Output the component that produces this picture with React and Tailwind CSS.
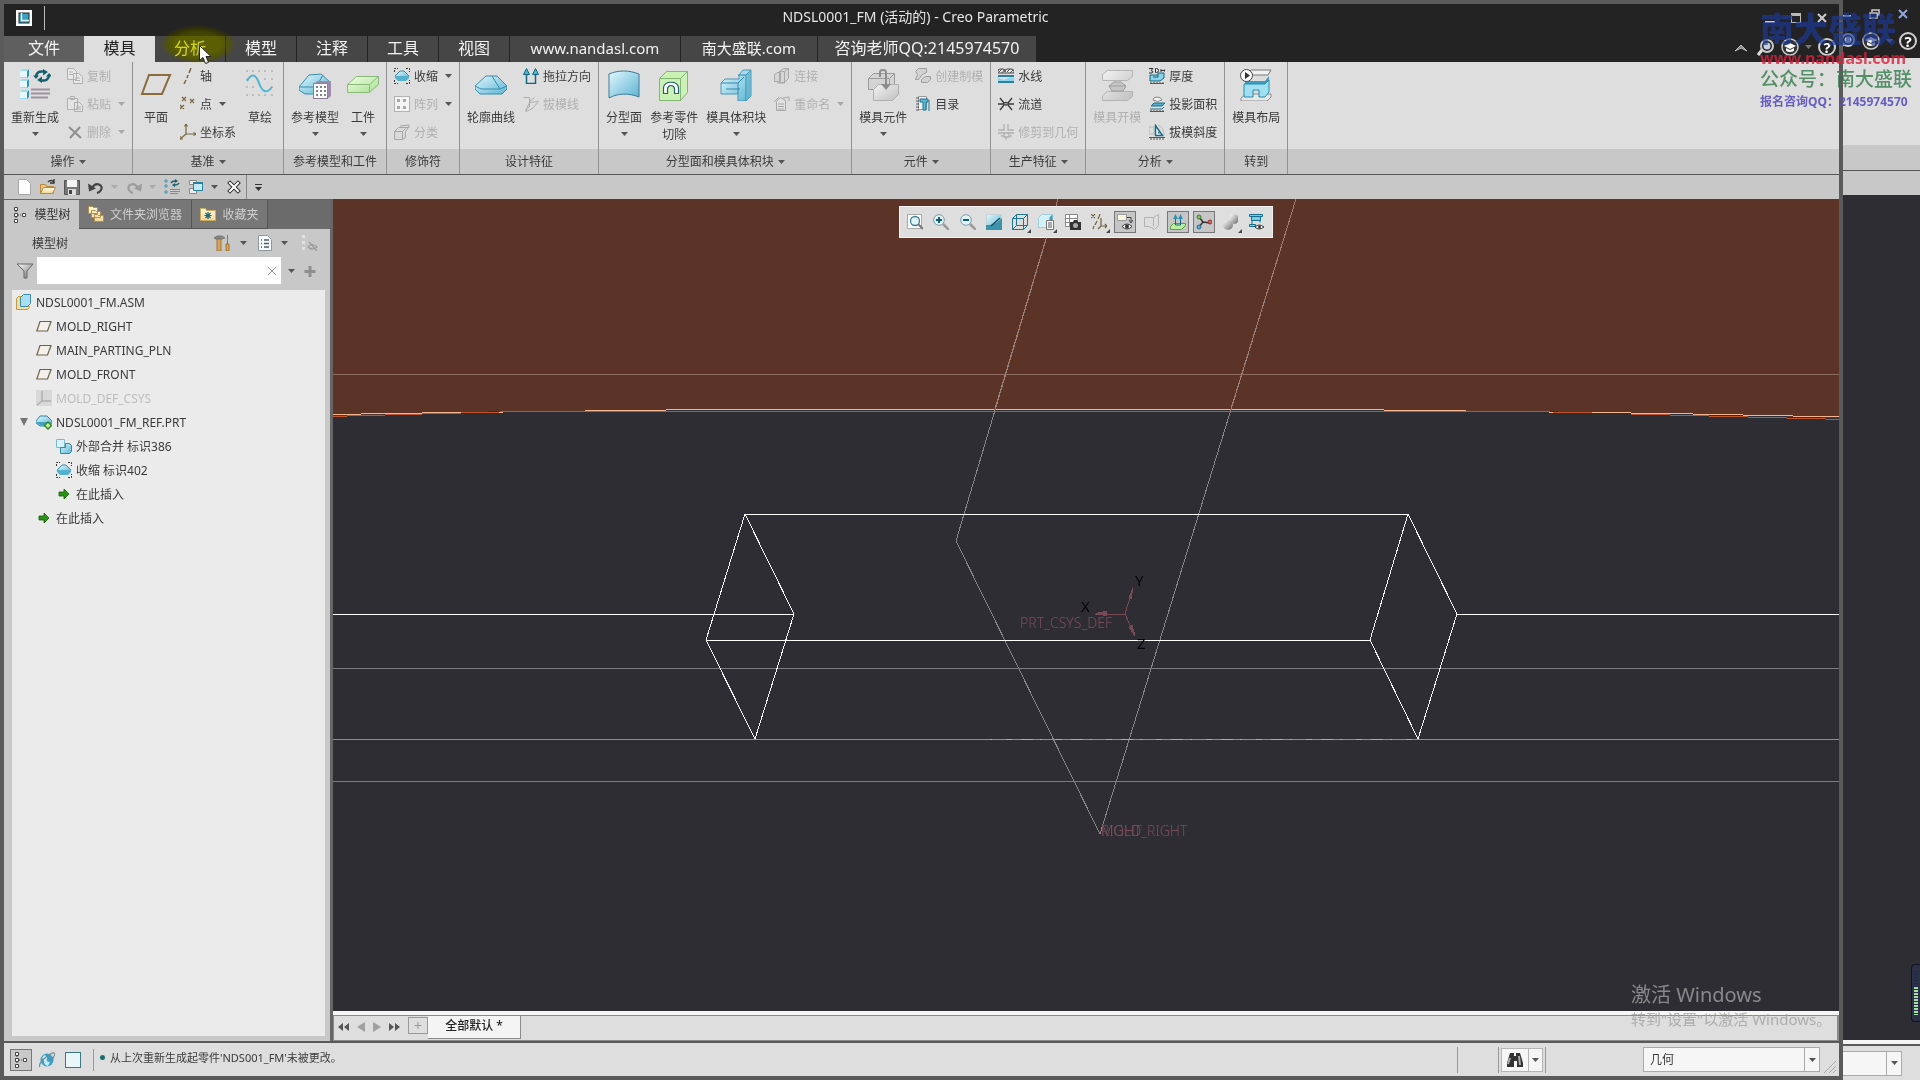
import React from 'react'

const Defs = () => (
  <svg width="0" height="0" className="absolute" aria-hidden="true">
    <defs>
      <linearGradient id="blue" x1="0" y1="0" x2="1" y2="1">
        <stop offset="0" stopColor="#e2f7fd" />
        <stop offset="1" stopColor="#5ab4d4" />
      </linearGradient>
      <linearGradient id="green" x1="0" y1="0" x2="1" y2="1">
        <stop offset="0" stopColor="#effde6" />
        <stop offset="1" stopColor="#a9e08f" />
      </linearGradient>
      <linearGradient id="gray" x1="0" y1="0" x2="1" y2="1">
        <stop offset="0" stopColor="#f2f2f2" />
        <stop offset="1" stopColor="#c0c0c0" />
      </linearGradient>
      <linearGradient id="folder" x1="0" y1="0" x2="0" y2="1">
        <stop offset="0" stopColor="#fffbe8" />
        <stop offset="1" stopColor="#f3d694" />
      </linearGradient>
      <linearGradient id="metal" x1="0" y1="0" x2="1" y2="1">
        <stop offset="0" stopColor="#ffffff" />
        <stop offset="1" stopColor="#6e6e6e" />
      </linearGradient>
    </defs>
  </svg>
)

// 32 x 32 drawings of the big ribbon buttons
const large = {
  regen: (
    <>
      <g fill="#e6f8fc">
        <path d="M1 2h7v7H1zM1 12h7v7H1zM1 23h7v7H1z" />
      </g>
      <g fill="#2d93b3">
        <path d="M8 2l2-2v7L8 9zM8 12l2-2v7l-2 2zM8 23l2-2v7l-2 2z" />
      </g>
      <g fill="#9ddcee">
        <path d="M1 2l2-2h7L8 2zM1 12l2-2h7l-2 2zM1 23l2-2h7l-2 2z" />
        <path d="M1 8h7v1H1zM1 18h7v1H1zM1 29h7v1H1z" />
      </g>
      <path d="M17 8c0-4 3-6 7-5.500M30 6c0 4-3 6-7 5.500" fill="none" stroke="#14606f" strokeWidth="2.500" />
      <path d="M24 0l5 3-5 3.500zM23 14l-5-3 5-3.500zM14 6.500h6L17 10zM27 7.500h6L30 4z" fill="#14606f" />
      <path d="M12 20.500h19M12 24.500h19M12 28.500h17" stroke="#9a949c" strokeWidth="2" />
    </>
  ),
  plane: <path d="M9 6h21L22 25H2z" fill="none" stroke="#8a6c3d" strokeWidth="2" />,
  sketch: (
    <>
      <path d="M3 2v.1M9 2v.1M15 2v.1M21 2v.1M28 2v.1M3 10v.1M28 10v.1M3 18v.1M28 18v.1M3 26v.1M9 26v.1M15 26v.1M21 26v.1M28 26v.1M9 18v.1M21 10v.1" stroke="#666" strokeWidth="1" strokeLinecap="square" />
      <path d="M3 12C8 3 12 6 15 14s7 12 13 4" fill="none" stroke="#4fb4d0" strokeWidth="2" />
    </>
  ),
  refModel: (
    <>
      <path d="M0 18L10 6l12-1 9 8v6l-9 6H6l-6-4z" fill="url(#blue)" stroke="#3a8da8" />
      <path d="M0 18h17l7-12M17 18l-2 7" fill="none" stroke="#3a8da8" />
      <path d="M15 15l3-3h14v15l-4 3z" fill="#9b89ae" />
      <rect x="14.500" y="14.500" width="14" height="15" fill="#fff" stroke="#8d7f9c" />
      <path d="M18 18v.1M22 18v.1M26 18v.1M18 22v.1M22 22v.1M26 22v.1M18 26v.1M22 26v.1M26 26v.1" stroke="#222" strokeWidth="1.500" strokeLinecap="square" />
    </>
  ),
  workpiece: (
    <>
      <path d="M.5 15.500l9-8h22v8l-9 8H.5z" fill="url(#green)" stroke="#8cba7a" />
      <path d="M.5 15.500h22l9-8M22.500 15.500v8" fill="none" stroke="#8cba7a" />
    </>
  ),
  silhouette: (
    <>
      <path d="M0 17L11 7h11l10 10v3l-5 5H5l-5-5z" fill="url(#blue)" stroke="#3a8da8" />
      <path d="M0 17l6 3h19l7-3M25 20l-8-13" fill="none" stroke="#3a8da8" />
    </>
  ),
  parting: <path d="M1 5c9-4 20-4 30 0v23c-10-4-21-4-30 1z" fill="url(#blue)" stroke="#3a7d98" />,
  cutout: (
    <>
      <path d="M1.500 9.500l7-7h21v21l-7 8h-21z" fill="#c9f2b4" stroke="#85b573" />
      <path d="M1.500 9.500h21v22M22.500 9.500l7-7" fill="none" stroke="#85b573" />
      <path d="M5.500 24.500v-6c1-7 14-7 15 0v6h-4v-5c-1-4-6-4-7 0v5z" fill="#fff" stroke="#1f6075" strokeWidth="1.200" />
    </>
  ),
  volume: (
    <>
      <path d="M1 14l4-4h14V6l4-5 8 0v26l-5 5h-8v-7H1z" fill="url(#blue)" stroke="#4b97b1" />
      <path d="M18 6h8v26M26 6l5-5M1 14h17v11M18 14l6-6M6 20h14" fill="none" stroke="#2f8aa8" />
      <path d="M26 6l5-5v26l-5 5z" fill="#5fb3cf" opacity=".7" />
    </>
  ),
  component: (
    <>
      <path d="M1.500 9.500l5-5h21v12l-4 4h-22z" fill="#d4d4d4" stroke="#9c9c9c" />
      <path d="M1.500 9.500h21v9M22.500 9.500l5-5" fill="none" stroke="#9c9c9c" />
      <path d="M6.500 20.500l5-5h20v10l-6 6h-19z" fill="url(#gray)" stroke="#b0b0b0" />
      <path d="M13 8V3q0-2 3-2t3 2v13" fill="none" stroke="#8d8d8d" strokeWidth="2" />
      <path d="M14 15h10l-5 6z" fill="#8d8d8d" />
    </>
  ),
  opening: (
    <>
      <path d="M1.500 5.500l5-4h25v6l-5 4h-25zM1.500 26.500l5-4h25v5l-5 4h-25z" fill="url(#gray)" stroke="#b4b4b4" />
      <path d="M8 17l5-4h7l5 4-3 5H11z" fill="#c6c6c6" stroke="#9b9b9b" />
      <path d="M8 17h17" stroke="#9b9b9b" />
    </>
  ),
  layout: (
    <>
      <path d="M1 29l5-4h25v3l-4 4H1z" fill="#e8e8e8" stroke="#8b8b8b" />
      <path d="M7 4l4-3h20l-3 5H9z" fill="#f2f2f2" stroke="#777" />
      <path d="M5 12h20l4-5v9l-4 4H5z" fill="#3b9dbf" />
      <path d="M4 15h21l4-4v12l-4 5h-6v-7h-6v7H4z" fill="#9fe0f3" stroke="#2c8aab" />
      <circle cx="6.500" cy="6.500" r="6" fill="#fff" stroke="#444" />
      <path d="M5 3l5 3.500L5 10z" fill="#333" />
    </>
  ),
}

// 16 x 16 drawings
const small = {
  copy: (
    <g fill="#e8e8e8" stroke="#b0b0b0">
      <path d="M.5.5h6l3 3v8h-9zM6.500 5.500h5l4 3v7h-9z" />
      <path d="M2 4h4M2 6.500h4M8 10h5M8 12.500h5" />
    </g>
  ),
  paste: (
    <g fill="#e4e4e4" stroke="#b0b0b0">
      <path d="M.5 2.500h10v11H.5zM3.500.5h4v3h-4zM7.500 6.500h5l3 3v6h-8z" />
      <path d="M9 11h5M9 13h5" />
    </g>
  ),
  del: <path d="M2 3l12 11M13 3L3 14" stroke="#8e8e8e" strokeWidth="2" />,
  axis: <path d="M11 0L9 5M8 7l-1 3M6 12l-2 4" stroke="#77683f" strokeWidth="1.500" />,
  point: <path d="M2 1l4 4M6 1L2 5M10 3l4 4M14 3l-4 4M0 9l4 4M4 9l-4 4" stroke="#77683f" strokeWidth="1.300" />,
  csys: (
    <g fill="none" stroke="#77683f" strokeWidth="1.200">
      <path d="M6 0v10h10M6 10L0 15" />
      <path d="M4.500 2.500L6 0l1.500 2.500M13.500 8.500L16 10l-2.500 1.500M0 12v3h3" />
    </g>
  ),
  shrink: (
    <>
      <path d="M1 8l5-5h4l5 5-3 4H4z" fill="url(#blue)" stroke="#3a8da8" />
      <path d="M1 8h14v2l-3 3H4l-3-3z" fill="#54b2cf" />
      <path d="M.5 4V.5H4M12 .5h3.500V4M.5 12v3.500H4M12 15.500h3.500V12" fill="none" stroke="#333" strokeDasharray="2 1" />
    </>
  ),
  pattern: (
    <>
      <rect x=".5" y=".5" width="15" height="15" fill="#f4f4f4" stroke="#b2b2b2" />
      <path d="M3 3h3v3H3zM9 3h3v3H9zM3 10h3v3H3zM9 10h3v3H9z" fill="#a8a8a8" />
    </>
  ),
  classify: (
    <g fill="#dadada" stroke="#a6a6a6">
      <path d="M.5 7.500l4-4h10l-3 4v6l-3 2h-8z" />
      <path d="M.5 7.500h8v8M8.500 7.500l3-3M6 2l9-1v3" fill="none" />
    </g>
  ),
  pull: (
    <g fill="#4fb7d4" stroke="#12697f">
      <path d="M3.500.5L.5 6.500h6zM12.500.5l-3 6h6z" />
      <path d="M3.500 6.500v9h9v-9" fill="none" strokeWidth="1.500" />
    </g>
  ),
  draft: <path d="M.5 1.500h6v9l-4 3M6.500 5.500l5-4M2.500 15.500l4-9 9-1-6 7z" fill="none" stroke="#adadad" />,
  attach: (
    <g fill="#d6d6d6" stroke="#a9a9a9">
      <path d="M.5 6.500l3-2h3v9h-6zM5.500 3.500l4-3h5v10l-4 4h-5z" />
      <path d="M5.500 3.500h5v11M10.500 3.500l4-3M3 15h8" fill="none" />
    </g>
  ),
  rename: (
    <g fill="#e2e2e2" stroke="#a6a6a6">
      <path d="M2.500 5.500l4-4 5 3v10h-9z" />
      <path d="M4 8h6M4 10.500h6M4 13h6M9 2l6-1v4M0 6l5-5" fill="none" />
    </g>
  ),
  mold: (
    <g fill="#d2d2d2" stroke="#9d9d9d">
      <path d="M.5 3.500l3-3h8v4l-4 2-4 5h-3l2-5zM6.500 11.500l4-3h5v3l-3 3h-6z" />
    </g>
  ),
  catalog: (
    <>
      <path d="M3.500.5h8v13h-8z" fill="#eee" stroke="#999" />
      <path d="M1 2h3M1 5h3M1 8h3M1 11h3M1 14h3" stroke="#555" />
      <path d="M5 3h8v3h-2v8H8V6H5z" fill="#59b8d6" stroke="#1c7796" />
      <path d="M14 4v11" stroke="#1c7796" />
    </>
  ),
  waterline: (
    <>
      <path d="M0 5V3q0-2 2-2h3q2 0 2 3 0-3 2-3h4q3 0 3 2v2z" fill="#e9e9e9" stroke="#444" />
      <path d="M1 4l3-3M4 5l3-4M9 4l3-3M12 5l3-3" stroke="#555" />
      <path d="M0 7h16v2H0zM0 13h16v2H0z" fill="#2d7f9c" />
      <path d="M0 9q4 4 8 2t8-2v4H0z" fill="#8bd6ec" />
    </>
  ),
  runner: <path d="M0 8h5M11 8h5M2 2l4 5M14 2l-4 5M2 14l4-5M14 14l-4-5M5 8q3-3 6 0M5 8q3 2 6 0" fill="none" stroke="#3b3b3b" strokeWidth="1.300" />,
  trim: <path d="M0 6h6V0M10 0v6h6M0 9h16M6 9v4h5V9M8 13v3M3 12h2M12 12h2" fill="none" stroke="#b0b0b0" strokeWidth="1.300" />,
  thickness: (
    <>
      <path d="M0 .5h4L2 2.500l2 1-1 1.500H0M6.500.5h1q2 0 2 2t-2 2h-1zM12 2.500h4M12 1v3M16 1v3" fill="none" stroke="#333" />
      <path d="M1 7h8V5h6v5l-4 3H1z" fill="#8bd3e8" stroke="#15647e" />
      <path d="M4 9h5V7" fill="none" stroke="#15647e" />
      <path d="M1 15.500h14M2 14v1M5 14v1M8 14v1M11 14v1M14 14v1" stroke="#555" />
    </>
  ),
  projarea: (
    <>
      <path d="M4 4q0-3 4-3t5 3q-4 3-9 0z" fill="#f0f0f0" stroke="#888" />
      <path d="M2 10l3-3h11l-3 3z" fill="#4fb0ce" stroke="#1a6f8b" />
      <path d="M1 13h12l2-2" fill="none" stroke="#1a6f8b" />
      <path d="M1 15.500h14M2 14v1M5 14v1M8 14v1M11 14v1M14 14v1" stroke="#555" />
    </>
  ),
  draftcheck: (
    <>
      <path d="M0 3h5v7H0zM9 1q6 2 6 10" fill="#ddd" stroke="#bbb" />
      <path d="M6.500 1.500v10h7z" fill="#eefaff" stroke="#166b86" strokeWidth="1.500" />
      <path d="M9 7v2.500h2z" fill="#166b86" />
      <path d="M0 13.500h16M2 14v2M5 14v2M8 14v2M11 14v2M14 14v2" stroke="#555" />
    </>
  ),
  newFile: <path d="M2.500.5h8l4 4v11h-12z" fill="#fff" stroke="#a8a8a8" />,
  open: (
    <>
      <path d="M.5 14.500v-9h5l1 2h7v7z" fill="#eec878" stroke="#b88a3a" />
      <path d="M.5 14.500l3-6h12l-3 6z" fill="url(#folder)" stroke="#b88a3a" />
      <path d="M8 3q3-3 6 0M14 0v4h-4" fill="none" stroke="#333" strokeWidth="1.300" />
    </>
  ),
  save: (
    <>
      <path d="M.5 1.500h15v14H.5z" fill="#777" stroke="#555" />
      <path d="M3 1h10v7H3z" fill="#f5f5f5" />
      <path d="M4 10h8v6H4z" fill="#ddd" />
      <path d="M5 11h3v4H5z" fill="#444" />
    </>
  ),
  undo: (
    <>
      <path d="M4 9q3-5 7-3.500 4 2 2 5.500-1 2-4 3" fill="none" stroke="#444" strokeWidth="2.200" />
      <path d="M0 4.500l1 8 7-3z" fill="#444" />
    </>
  ),
  redo: (
    <>
      <path d="M12 9Q9 4 5 5.500 1 7.500 3 11q1 2 4 3" fill="none" stroke="#9c9c9c" strokeWidth="2.200" />
      <path d="M16 4.500l-1 8-7-3z" fill="#9c9c9c" />
    </>
  ),
  regenSmall: (
    <>
      <path d="M1 1h2v2H1zM1 6h2v2H1zM1 12h2v2H1z" fill="#dff4fb" stroke="#3a8da8" />
      <path d="M7 4q1-2 4-2M15 4q-1 2-4 2" fill="none" stroke="#14606f" strokeWidth="1.500" />
      <path d="M11 0l3 2-3 2zM11 8L8 6l3-2z" fill="#14606f" />
      <path d="M6 10.500h10M6 12.500h10M6 14.500h8" stroke="#8a8a8a" />
    </>
  ),
  windows: (
    <>
      <path d="M1.500 1.500h7v4h-7zM1.500 9.500h7v5h-7z" fill="#eee" stroke="#888" />
      <path d="M5.500 3.500h9v8h-9z" fill="#bfeaf7" stroke="#2a7f9b" />
      <path d="M5 4h10" stroke="#2a7f9b" strokeWidth="2" />
    </>
  ),
  closeWin: (
    <>
      <path d="M4 4l8 8M12 4l-8 8" stroke="#333" strokeWidth="4" strokeLinecap="square" />
      <path d="M4 4l8 8M12 4l-8 8" stroke="#fff" strokeWidth="2" strokeLinecap="square" />
    </>
  ),
  treeIcon: (
    <g fill="#fff" stroke="#444">
      <path d="M2.500.5h3v3h-3zM2.500 6.500h3v3h-3zM2.500 12.500h3v3h-3zM10.500 6.500h3v3h-3z" />
      <path d="M6 8h4M4 4v2M4 10v2" strokeDasharray="1 1" />
    </g>
  ),
  folders: (
    <g fill="url(#folder)" stroke="#b98f45">
      <path d="M.5 7.500v-7h4l1 1h4v6zM3.500 11.500v-7h4l1 1h4v6zM6.500 15.500v-7h3l1 1h5v6z" />
    </g>
  ),
  favorites: (
    <>
      <path d="M.5 14.500v-12h5l1 2h9v10z" fill="url(#folder)" stroke="#cda95e" />
      <path d="M8 6v7M4.500 9.500h7M5.500 7l5 5M10.500 7l-5 5" stroke="#1b6a7d" strokeWidth="1.200" />
    </>
  ),
  tools: (
    <>
      <path d="M0 3q3-3 8-2l3 2-3 1H2z" fill="#8c8c8c" stroke="#555" strokeWidth=".6" />
      <path d="M3 4h4v12H3z" fill="#d9a557" stroke="#8c6426" strokeWidth=".8" />
      <path d="M13.500 0v9" stroke="#777" />
      <path d="M12 9h3v7h-3z" fill="#d9a557" stroke="#8c6426" strokeWidth=".8" />
    </>
  ),
  list: (
    <>
      <path d="M1.500.5h9l4 4v11h-13z" fill="#f7fbfc" stroke="#8d9ba0" />
      <path d="M4 5h1M4 8.500h1M4 12h1M7 5h5M7 8.500h5M7 12h5" stroke="#4c5f66" strokeWidth="1.300" />
    </>
  ),
  hidden: (
    <>
      <path d="M0 0h3v3H0zM0 6h3v3H0zM0 12h3v3H0z" fill="#e2e2e2" />
      <path d="M6 12q4-5 9 0-5 4-9 0zM7 7l8 9" fill="none" stroke="#9a9a9a" strokeWidth="1.200" />
    </>
  ),
  funnel: <path d="M0 1h16l-6 7v7H7V8z" fill="url(#metal)" stroke="#666" />,
  plus: <path d="M8 3v11M2.500 8.500h11" stroke="#8e8e8e" strokeWidth="3" />,
  asm: (
    <>
      <path d="M.5 4.500l2-2h8v10h3v1l-2 2h-11z" fill="#f6dc9a" stroke="#c39a44" />
      <path d="M4.500 3.500l3-3h7v9l-3 3h-7z" fill="#a6e0f2" stroke="#3a8da8" />
    </>
  ),
  planeSmall: <path d="M4 3.500h11L11.500 13H.8z" fill="#f3f1ea" stroke="#6e6147" strokeWidth="1.200" />,
  csysOff: (
    <>
      <rect width="16" height="16" fill="#d8d8d8" />
      <path d="M6 1v10h9M6 11l-5 4" fill="none" stroke="#b0b0b0" strokeWidth="1.500" />
    </>
  ),
  refPart: (
    <>
      <path d="M0 7l4-5h7l5 5v2l-4 3H4L0 9z" fill="url(#blue)" stroke="#2f88a5" />
      <path d="M0 8h15l-3 3H4z" fill="#3f9fbe" />
      <path d="M12 8l3.500 3.500L12 15l-3.500-3.500z" fill="#c8f3a4" stroke="#348a1d" strokeWidth="1.500" />
    </>
  ),
  merge: (
    <>
      <path d="M.5 1.500h8v8h-8z" fill="#d6f2fa" stroke="#7cb8cb" />
      <path d="M9.500 5.500h4l2 2v6l-2 2h-9v-6h5z" fill="url(#blue)" stroke="#2f88a5" />
    </>
  ),
  insert: <path d="M3 6h5V3l5 5-5 5v-3H3z" fill="#2c9414" stroke="#145c06" strokeWidth=".8" />,
  refit: (
    <>
      <path d="M.5.5h14v14H.5z" fill="#fff" stroke="#aaa" />
      <circle cx="8" cy="7" r="4.500" fill="#e0f4fa" stroke="#3b7f95" strokeWidth="1.300" />
      <path d="M11 10l5 5" stroke="#777" strokeWidth="2" />
    </>
  ),
  zoomIn: (
    <>
      <circle cx="6" cy="6" r="5.300" fill="#e0f4fa" stroke="#7a9ba6" />
      <path d="M6 3v6M3 6h6" stroke="#0c5d78" strokeWidth="2" />
      <path d="M10 10l6 6" stroke="#999" strokeWidth="2.500" />
    </>
  ),
  zoomOut: (
    <>
      <circle cx="6" cy="6" r="5.300" fill="#e0f4fa" stroke="#7a9ba6" />
      <path d="M3 6h6" stroke="#0c5d78" strokeWidth="2" />
      <path d="M10 10l6 6" stroke="#999" strokeWidth="2.500" />
    </>
  ),
  repaint: (
    <>
      <rect x=".5" y=".5" width="15" height="15" fill="url(#blue)" stroke="#c4d4d9" />
      <path d="M0 16V11q9 1 16-7v12z" fill="#3c93ae" />
      <path d="M5 12l9-8" stroke="#174e60" strokeWidth="1.500" />
    </>
  ),
  wire: (
    <g fill="none" stroke="#1d7592">
      <path d="M.5 4.500h11v11H.5zM4.500.5h11v11h-11zM.5 4.500l4-4M11.500 4.500l4-4M.5 15.500l4-4M11.500 15.500l4-4" />
    </g>
  ),
  orient: (
    <>
      <path d="M.5 3.500l3-3h11v10l-3 3H.5z" fill="#d4f1fa" stroke="#a2cdda" />
      <path d="M11.500 3.500l3-3v6h-3z" fill="#3aa0c0" />
      <path d="M8.500 6.500h7v9h-7z" fill="#fff" stroke="#777" />
      <path d="M10 9h4M10 11h4M10 13h4" stroke="#555" />
    </>
  ),
  viewmgr: (
    <>
      <path d="M.5.500h12v12H.5zM.5 4.500h12M.5 8.500h8M4.500.5v12" fill="#fff" stroke="#888" />
      <path d="M5 8h3l1-2h3l1 2h3v8H5z" fill="#333" />
      <circle cx="10.500" cy="11.500" r="2.500" fill="#aaa" />
    </>
  ),
  datum: (
    <g fill="none" stroke="#6e6140" strokeWidth="1.200">
      <path d="M0 0l4 4M4 0L0 4M9 0L7 5M6 7l-2 4M3 12l-1 3M10 4v8h6M10 12l-3 3M14 10l2 2-2 2" />
    </g>
  ),
  annot: (
    <>
      <path d="M.5.500h9v6h-9z" fill="#fffbe0" stroke="#999" />
      <path d="M10 3.500h4v4M12 6l2 3 2-3" fill="none" stroke="#444" />
      <path d="M5 12.500q5-5 10 0-5 5-10 0z" fill="#fff" stroke="#333" />
      <circle cx="10" cy="12.500" r="2" fill="#333" />
    </>
  ),
  section: <path d="M.5 3.500h9l5-3v11l-4 4-5-3h-5zM9.500 3.500v9" fill="#dedede" stroke="#b2b2b2" />,
  pulldir: (
    <>
      <path d="M.5 12.500l3-3h12v2l-4 4H.5z" fill="#b9efa0" stroke="#5a9d45" />
      <path d="M5.500 5v6h5V5" fill="none" stroke="#12697f" />
      <path d="M5.500 0L3 5h5zM10.500 0L8 5h5z" fill="#2d93b3" />
    </>
  ),
  spin: (
    <>
      <path d="M7 8l-4-5M7 8l7 1M7 8l-4 5" stroke="#333" strokeWidth="1.500" />
      <circle cx="3" cy="3" r="2" fill="#7fbf6c" stroke="#447a35" />
      <circle cx="14" cy="8" r="2" fill="#e06060" stroke="#993030" />
      <circle cx="3" cy="13" r="2" fill="#62a9d6" stroke="#2d6890" />
    </>
  ),
  spheres: (
    <>
      <path d="M7 2q4-4 8 0v6q-3 4-8 0z" fill="url(#metal)" />
      <circle cx="5" cy="11" r="5" fill="url(#metal)" />
    </>
  ),
  layoutSmall: (
    <>
      <path d="M.5.5h13v2H.5zM2.500 2.500h9v4h-9zM.5 10.500h6v2h-6z" fill="#7ccbe2" stroke="#16708d" />
      <path d="M3 6.500v4M11 6.500v2" stroke="#16708d" />
      <path d="M6 13q4-4 9 0-5 4-9 0z" fill="#fff" stroke="#333" />
      <circle cx="10.500" cy="13" r="1.500" fill="#333" />
    </>
  ),
  browser: (
    <>
      <circle cx="8" cy="8" r="6.500" fill="#3a9fc6" />
      <path d="M5 3q4 1 3 4t3 3l-2 4q-4-1-4-4t-2-4z" fill="#bfe8f5" />
      <path d="M1 15Q-1 12 6 6t9-5q2 2-3 8" fill="none" stroke="#6d8b97" strokeWidth="1.200" />
    </>
  ),
  blank: <rect x=".5" y=".5" width="15" height="15" fill="#e9f5f8" stroke="#3d7787" />,
  binoculars: (
    <>
      <path d="M3 1h4v3h2V1h4l3 10v4h-6V9H7v6H0v-4z" fill="#333" />
      <path d="M3 6l-2 6M12 4l1 9" stroke="#aaa" strokeWidth="2" />
    </>
  ),
  school: (
    <>
      <path d="M2 7l6-3 6 3-6 3z" fill="#fff" />
      <path d="M4 9v3q4 2 8 0V9l-4 2z" fill="#fff" />
    </>
  ),
}

const Icon = ({ name }) => (
  <svg width="16" height="16" viewBox="0 0 16 16" className="shrink-0" aria-hidden="true">{small[name]}</svg>
)

const Caret = ({ className = 'text-[#555]' }) => (
  <svg width="7" height="4" viewBox="0 0 7 4" className={`shrink-0 ${className}`} aria-hidden="true">
    <path d="M0 0h7L3.500 4z" fill="currentColor" />
  </svg>
)

const Big = ({ icon, label, second, caret, off }) => (
  <button className={`flex flex-col items-center pt-[7px] leading-[17px] ${off ? 'text-[#b0b0b0]' : ''}`}>
    <svg width="32" height="32" viewBox="0 0 32 32" className="mb-2" aria-hidden="true">{large[icon]}</svg>
    <span>{label}</span>
    {second && <span>{second}</span>}
    {caret && <span className="flex h-4 items-center"><Caret /></span>}
  </button>
)

const Row = ({ icon, label, caret, off, caretOn }) => (
  <button className={`flex h-7 items-center gap-1 ${off ? 'text-[#b0b0b0]' : ''}`}>
    <Icon name={icon} />
    <span>{label}</span>
    {caret && <span className="pl-[3px]"><Caret className={off && !caretOn ? 'text-[#a8a8a8]' : 'text-[#555]'} /></span>}
  </button>
)

const Group = ({ title, caret, children }) => (
  <section className="flex shrink-0 flex-col border-r border-[#929292]">
    <div className="flex h-[87px] gap-2 px-[7px]">{children}</div>
    <div className="flex h-[25px] items-center justify-center gap-1 bg-[#c8c8c8]">
      <span>{title}</span>
      {caret && <Caret />}
    </div>
  </section>
)

const Col = ({ children }) => <div className="flex flex-col items-start">{children}</div>

const tabs = [
  { name: '分析', w: 'w-[71px]' },
  { name: '模型', w: 'w-[71px]' },
  { name: '注释', w: 'w-[71px]' },
  { name: '工具', w: 'w-[71px]' },
  { name: '视图', w: 'w-[71px]' },
  { name: 'www.nandasl.com', w: 'w-[171px] text-[15px]' },
  { name: '南大盛联.com', w: 'w-[137px] text-[15px]' },
  { name: '咨询老师QQ:2145974570', w: 'w-[219px]' },
]

const HelpIcons = () => (
  <div className="flex items-center">
    <svg width="18" height="18" viewBox="0 0 18 18" className="mr-[6px]" aria-hidden="true">
      <circle cx="10" cy="8" r="6" fill="#222" stroke="#ccc" strokeWidth="2" />
      <circle cx="10" cy="8" r="3.500" fill="#c8d0e0" />
      <path d="M5 12l-4 5" stroke="#ddd" strokeWidth="3" />
    </svg>
    <svg width="18" height="18" viewBox="-1 -1 18 18" aria-hidden="true">
      <circle cx="8" cy="8" r="8" fill="#333" stroke="#ccc" strokeWidth="1.500" />
      {small.school}
    </svg>
    <Caret className="mx-[6px] text-[#777]" />
    <button aria-label="帮助" className="flex h-[18px] w-[18px] items-center justify-center rounded-full border-2 border-[#d0d0d0] text-[15px] leading-none font-bold text-white">?</button>
  </div>
)

const TitleBar = () => (
  <header className="bg-[#232323] text-white">
    <div className="flex h-8 items-center pb-1">
      <div className="flex flex-1 items-center">
        <svg width="16" height="16" viewBox="0 0 16 16" className="ml-3" aria-hidden="true">
          <rect width="16" height="16" fill="#fff" />
          <rect x="3" y="3" width="10" height="10" fill="#37a0c4" stroke="#222" />
          <path d="M5.500 3v7.500H13" fill="none" stroke="#d8f1f9" strokeWidth="1.500" />
        </svg>
        <span className="ml-3 h-6 w-px bg-[#bbb]" />
      </div>
      <h1 className="pb-[2px] text-[14px] leading-none text-[#e6e6e6]">NDSL0001_FM (活动的) - Creo Parametric</h1>
      <div className="flex flex-1 items-center justify-end gap-4 pr-3">
        <button aria-label="最小化" className="h-[10px] w-[10px] border-b-2 border-[#ccc]" />
        <button aria-label="最大化" className="h-[10px] w-[10px] border border-t-[3px] border-[#bbb]" />
        <button aria-label="关闭">
          <svg width="10" height="10" viewBox="0 0 10 10"><path d="M1 1l8 8M9 1L1 9" stroke="#ccc" strokeWidth="2" /></svg>
        </button>
      </div>
    </div>
    <nav className="flex h-[26px] text-[16px] leading-none text-[#f2f2f2]">
      <button className="w-20 bg-[#5f5f5f] pb-[2px]">文件</button>
      <button className="w-[71px] bg-[#dedede] pb-[2px] text-[#222]">模具</button>
      {tabs.map((t) => (
        <button key={t.name} className={`${t.w} border-r border-[#232323] bg-[#464646] pb-[2px]`}>{t.name}</button>
      ))}
      <div className="flex flex-1 items-center justify-end pr-[3px] pb-1">
        <svg width="14" height="9" viewBox="0 0 14 9" className="mr-[9px]" aria-hidden="true">
          <path d="M1 8l6-6 6 6-6-3z" fill="#888" stroke="#bbb" />
        </svg>
        <HelpIcons />
      </div>
    </nav>
  </header>
)

const Ribbon = () => (
  <div className="flex border-b border-[#555] bg-[#dedede]">
    <Group title="操作" caret>
      <Big icon="regen" label="重新生成" caret />
      <Col>
        <Row icon="copy" label="复制" off />
        <Row icon="paste" label="粘贴" off caret />
        <Row icon="del" label="删除" off caret />
      </Col>
    </Group>
    <Group title="基准" caret>
      <Big icon="plane" label="平面" />
      <Col>
        <Row icon="axis" label="轴" />
        <Row icon="point" label="点" caret />
        <Row icon="csys" label="坐标系" />
      </Col>
      <Big icon="sketch" label="草绘" />
    </Group>
    <Group title="参考模型和工件">
      <Big icon="refModel" label="参考模型" caret />
      <Big icon="workpiece" label="工件" caret />
    </Group>
    <Group title="修饰符">
      <Col>
        <Row icon="shrink" label="收缩" caret />
        <Row icon="pattern" label="阵列" off caret caretOn />
        <Row icon="classify" label="分类" off />
      </Col>
    </Group>
    <Group title="设计特征">
      <Big icon="silhouette" label="轮廓曲线" />
      <Col>
        <Row icon="pull" label="拖拉方向" />
        <Row icon="draft" label="拔模线" off />
      </Col>
    </Group>
    <Group title="分型面和模具体积块" caret>
      <Big icon="parting" label="分型面" caret />
      <Big icon="cutout" label="参考零件" second="切除" />
      <Big icon="volume" label="模具体积块" caret />
      <Col>
        <Row icon="attach" label="连接" off />
        <Row icon="rename" label="重命名" off caret />
      </Col>
    </Group>
    <Group title="元件" caret>
      <Big icon="component" label="模具元件" caret />
      <Col>
        <Row icon="mold" label="创建制模" off />
        <Row icon="catalog" label="目录" />
      </Col>
    </Group>
    <Group title="生产特征" caret>
      <Col>
        <Row icon="waterline" label="水线" />
        <Row icon="runner" label="流道" />
        <Row icon="trim" label="修剪到几何" off />
      </Col>
    </Group>
    <Group title="分析" caret>
      <Big icon="opening" label="模具开模" off />
      <Col>
        <Row icon="thickness" label="厚度" />
        <Row icon="projarea" label="投影面积" />
        <Row icon="draftcheck" label="拔模斜度" />
      </Col>
    </Group>
    <Group title="转到">
      <Big icon="layout" label="模具布局" />
    </Group>
    <div className="flex flex-1 flex-col justify-end"><div className="h-[25px] bg-[#c8c8c8]" /></div>
  </div>
)

const QuickBar = () => (
  <div className="flex h-6 items-center bg-[#c8c8c8] pl-3">
    <div className="flex items-center gap-2">
      <button aria-label="新建"><Icon name="newFile" /></button>
      <button aria-label="打开"><Icon name="open" /></button>
      <button aria-label="保存"><Icon name="save" /></button>
      <button aria-label="撤消" className="flex items-center gap-[7px]"><Icon name="undo" /><Caret className="text-[#aaa]" /></button>
      <button aria-label="重做" className="flex items-center gap-[7px]"><Icon name="redo" /><Caret className="text-[#aaa]" /></button>
      <button aria-label="重新生成"><Icon name="regenSmall" /></button>
      <button aria-label="窗口" className="flex items-center gap-[7px]"><Icon name="windows" /><Caret /></button>
      <button aria-label="关闭窗口"><Icon name="closeWin" /></button>
    </div>
    <span className="mr-2 ml-1 h-6 w-px bg-[#888]" />
    <button aria-label="自定义" className="border-t border-[#333] pt-[2px]"><Caret className="text-[#333]" /></button>
  </div>
)

const tree = [
  { icon: 'asm', text: 'NDSL0001_FM.ASM', pad: 'pl-1' },
  { icon: 'planeSmall', text: 'MOLD_RIGHT', pad: 'pl-6' },
  { icon: 'planeSmall', text: 'MAIN_PARTING_PLN', pad: 'pl-6' },
  { icon: 'planeSmall', text: 'MOLD_FRONT', pad: 'pl-6' },
  { icon: 'csysOff', text: 'MOLD_DEF_CSYS', pad: 'pl-6', off: true },
  { icon: 'refPart', text: 'NDSL0001_FM_REF.PRT', pad: 'pl-2', open: true },
  { icon: 'merge', text: '外部合并 标识386', pad: 'pl-11' },
  { icon: 'shrink', text: '收缩 标识402', pad: 'pl-11' },
  { icon: 'insert', text: '在此插入', pad: 'pl-11' },
  { icon: 'insert', text: '在此插入', pad: 'pl-6' },
]

const SidePanel = () => (
  <aside className="flex w-[329px] shrink-0 flex-col border-r-[3px] border-[#666] bg-[#c8c8c8]">
    <div className="flex h-[30px] border-t border-[#666] bg-[#6b6b6b] text-[#cfcfcf]">
      <button className="flex w-[75px] items-center justify-center gap-[6px] bg-[#c8c8c8] text-[#333]"><Icon name="treeIcon" />模型树</button>
      <button className="flex w-[113px] items-center justify-center gap-[6px] border-r border-b border-[#555] bg-[#777]"><Icon name="folders" />文件夹浏览器</button>
      <button className="flex w-[76px] items-center justify-center gap-[6px] border-r border-b border-[#555] bg-[#777]"><Icon name="favorites" />收藏夹</button>
    </div>
    <div className="flex h-7 items-center pr-3 pl-7">
      <h2 className="flex-1">模型树</h2>
      <button aria-label="设置" className="mr-[10px] flex items-center gap-[10px]"><Icon name="tools" /><Caret /></button>
      <button aria-label="显示" className="mr-[14px] flex items-center gap-2"><Icon name="list" /><Caret /></button>
      <button aria-label="隐藏"><Icon name="hidden" /></button>
    </div>
    <div className="flex h-[33px] items-start pr-3 pl-[13px]">
      <div className="flex h-[27px] flex-1 items-center">
        <Icon name="funnel" />
        <div className="relative ml-1 h-[27px] flex-1">
          <input type="text" aria-label="过滤" className="h-full w-full bg-white pr-6 pl-1 outline-none" />
          <button aria-label="清除" className="absolute top-[9px] right-1">
            <svg width="10" height="10" viewBox="0 0 10 10"><path d="M1 1l8 8M9 1L1 9" stroke="#999" /></svg>
          </button>
        </div>
        <Caret className="mx-[7px] text-[#555]" />
        <button aria-label="添加"><Icon name="plus" /></button>
      </div>
    </div>
    <ul className="mr-[5px] mb-[5px] ml-2 flex-1 bg-[#ebebeb]">
      {tree.map((n, i) => (
        <li key={i} className={`flex h-6 items-center ${n.pad} ${n.off ? 'text-[#bdbdbd]' : ''}`}>
          {n.open && (
            <svg width="8" height="8" viewBox="0 0 8 8" className="mr-2" aria-hidden="true"><path d="M0 0h8L4 8z" fill="#777" /></svg>
          )}
          <Icon name={n.icon} />
          <span className="ml-1">{n.text}</span>
        </li>
      ))}
    </ul>
  </aside>
)

const viewTools = [
  { icon: 'refit', name: '重新调整' },
  { icon: 'zoomIn', name: '放大' },
  { icon: 'zoomOut', name: '缩小' },
  { icon: 'repaint', name: '重画' },
  { icon: 'wire', name: '显示样式', more: true },
  { icon: 'orient', name: '已保存方向', more: true },
  { icon: 'viewmgr', name: '视图管理器' },
  { icon: 'datum', name: '基准显示', more: true },
  { icon: 'annot', name: '注释显示', on: true },
  { icon: 'section', name: '截面' },
  { icon: 'pulldir', name: '拖拉方向显示', on: true },
  { icon: 'spin', name: '旋转中心', on: true },
  { icon: 'spheres', name: '外观', more: true },
  { icon: 'layoutSmall', name: '模具显示' },
]

const Scene = () => (
  <svg viewBox="333 199 1506 812" preserveAspectRatio="xMidYMid slice" className="absolute inset-0 h-full w-full" shapeRendering="crispEdges" fill="none">
    <path d="M333 199H1839V418L1700 414L1530 411L1350 410H1000L830 410L505 411L400 414L333 416z" fill="#5b3427" />
    <path d="M333 374.500H1839" stroke="#8f6a5e" />
    <path d="M333 416.500H347M347 415.500H385M385 414.500H422M422 413.500H461M461 412.500H500M500 411.500H1550M1550 412.500H1631M1631 414.500H1670M1670 415.500H1709M1709 416.500H1748M1748 417.500H1787M1787 418.500H1826M1826 419.500H1839" stroke="#c0552c" />
    <path d="M333 414.500H361M361 413.500H422M422 412.500H461M499 412.500H503M585 410.500H666M666 409.500H1384M1384 410.500H1466M1549 412.500H1553M1592 412.500H1631M1631 413.500H1693M1693 414.500H1743M1743 415.500H1793M1793 416.500H1839" stroke="#f5b48e" />
    <path d="M1058 199L956 541L1100 834L1296 199" stroke="#86868a" />
    <path d="M1058 199L994 412M1296 199L1230 412" stroke="#a07f75" />
    <path d="M333 668.500H1839M333 781.500H1839" stroke="#7c7c80" />
    <path d="M333 739.500H1839" stroke="#2fb4be" />
    <path d="M990 739.500H1420" stroke="#b9a8a0" strokeDasharray="2 14 6 9 12 7" />
    <path d="M745 514.500H1408M333 614.500H794M706 640.500H1370M1457 614.500H1839" stroke="#fff" />
    <path d="M745 514L706 640L755 739L794 614zM1408 514L1370 640L1418 739L1457 614z" stroke="#f4f4f4" />
    <g stroke="#774955" fill="#774955">
      <path d="M1125 614L1133 588M1125 614H1095M1125 614L1135 636" />
      <path d="M1133 588l-4 10 2 1zM1096 613.500l10-2v4zM1135 636l-6-9 3-2z" />
    </g>
    <g fill="#7d4d59" className="text-[14px] font-light">
      <text x="1020" y="628">PRT_CSYS_DEF</text>
      <text x="1101" y="836">MOLD_RIGHT</text>
      <text x="1101" y="836">RIGHT</text>
    </g>
    <g fill="#050505" className="text-[15px]">
      <text x="1081" y="612">X</text>
      <text x="1135" y="586">Y</text>
      <text x="1137" y="649">Z</text>
    </g>
  </svg>
)

const Viewport = () => (
  <main className="flex min-w-0 flex-1 flex-col">
    <div className="relative flex flex-1 items-start justify-center overflow-hidden bg-[#2e2d33] pt-[7px]">
      <Scene />
      <div className="relative flex h-8 w-[374px] items-center justify-between border border-[#f2f2f2] bg-[#dedede] px-1">
        {viewTools.map((t) => (
          <button key={t.name} aria-label={t.name} className={`relative flex h-[22px] w-[22px] items-center justify-center ${t.on ? 'border border-[#777] bg-[#c6c6c6]' : ''}`}>
            <Icon name={t.icon} />
            {t.more && <svg width="4" height="4" viewBox="0 0 4 4" className="absolute right-0 bottom-0"><path d="M4 0v4H0z" fill="#444" /></svg>}
          </button>
        ))}
      </div>
    </div>
    <div className="h-1 bg-[#f6f6f6]" />
    <div className="flex h-[26px] items-start border border-r-2 border-[#8a8a8a] bg-[#dedede]">
      <div className="flex h-[22px] items-center gap-2 px-1 text-[#555]">
        <button aria-label="第一个"><svg width="11" height="8" viewBox="0 0 11 8"><path d="M5 0v8L0 4zM11 0v8L6 4z" fill="currentColor" /></svg></button>
        <button aria-label="上一个" className="text-[#a0a0a0]"><svg width="8" height="10" viewBox="0 0 8 10"><path d="M8 0v10L0 5z" fill="currentColor" /></svg></button>
        <button aria-label="下一个" className="text-[#a0a0a0]"><svg width="8" height="10" viewBox="0 0 8 10"><path d="M0 0v10l8-5z" fill="currentColor" /></svg></button>
        <button aria-label="最后一个"><svg width="11" height="8" viewBox="0 0 11 8"><path d="M0 0v8l5-4zM6 0v8l5-4z" fill="currentColor" /></svg></button>
      </div>
      <button aria-label="新选项卡" className="mt-px ml-1 h-[17px] w-5 border border-[#999] text-[14px] leading-none text-[#999]">+</button>
      <button className="h-[23px] w-[93px] border-r border-b border-[#8a8a8a] bg-[#f4f4f4] pb-1 font-medium text-[#222]">全部默认 *</button>
    </div>
  </main>
)

const StatusBar = () => (
  <footer className="flex h-[35px] items-center border-t-2 border-[#5a5a5a] bg-[#dedede] pr-[3px]">
    <button aria-label="模型树" className="ml-[6px] flex h-[22px] w-[22px] items-center justify-center border border-[#777] bg-[#c8c8c8]"><Icon name="treeIcon" /></button>
    <button aria-label="浏览器" className="ml-[7px]"><Icon name="browser" /></button>
    <button aria-label="全屏" className="ml-[10px]"><Icon name="blank" /></button>
    <span className="ml-3 h-[22px] w-px bg-[#999]" />
    <p className="ml-[6px] flex flex-1 items-center gap-[5px] pb-1 text-[11px]">
      <span className="h-[5px] w-[5px] rounded-full bg-[#1f6a70]" />
      从上次重新生成起零件'NDS001_FM'未被更改。
    </p>
    <span className="h-[26px] w-px bg-[#999]" />
    <span className="ml-10 h-[26px] w-px bg-[#999]" />
    <button aria-label="查找" className="mx-[2px] flex h-6 w-[42px] border border-[#b5b5b5] bg-[#f6f6f6]">
      <span className="flex h-full flex-1 items-center justify-center"><Icon name="binoculars" /></span>
      <span className="flex h-full w-[14px] items-center justify-center border-l border-[#b5b5b5]"><Caret /></span>
    </button>
    <span className="h-[26px] w-px bg-[#999]" />
    <div className="relative ml-[97px] h-[25px] w-[177px]">
      <select aria-label="过滤器" className="h-full w-full appearance-none border border-[#aaa] bg-[#f6f6f6] pl-[6px] outline-none">
        <option>几何</option>
      </select>
      <span className="pointer-events-none absolute top-px right-px flex h-[23px] w-[15px] items-center justify-center border-l border-[#aaa]"><Caret /></span>
    </div>
    <svg width="12" height="12" viewBox="0 0 12 12" className="mb-[3px] ml-1 self-end" aria-hidden="true"><path d="M0 12L12 0M5 12l7-7M9 12l3-3" stroke="#aaa" /></svg>
  </footer>
)

// sliver of the second window that shows behind the active one
const BackWindow = () => (
  <div className="flex w-[77px] shrink-0 flex-col overflow-hidden bg-[#2e2d33]">
    <div className="flex h-[58px] flex-col items-end bg-[#232323]">
      <div className="flex h-7 items-center gap-[18px] pr-3 text-[#ccc]">
        <span className="h-[5px] w-[9px] border-b-2" />
        <svg width="11" height="10" viewBox="0 0 11 10"><path d="M3 3V1h7v5H8M1 4h7v5H1z" fill="none" stroke="currentColor" strokeWidth="1.500" /></svg>
        <svg width="10" height="10" viewBox="0 0 10 10"><path d="M1 1l8 8M9 1L1 9" stroke="#8fa8dc" strokeWidth="2" /></svg>
      </div>
      <div className="flex h-[26px] items-center pr-[3px]"><HelpIcons /></div>
    </div>
    <div className="h-[87px] bg-[#dedede]" />
    <div className="h-[25px] bg-[#c8c8c8]" />
    <div className="h-[25px] border-t border-[#555] bg-[#c8c8c8]" />
    <div className="flex flex-1 items-end justify-end pb-[18px]">
      <div className="flex h-[58px] w-[9px] flex-col justify-between rounded-l-sm border border-r-0 border-[#10131f] bg-[#2c3047] px-[2px] py-[6px]">
        <span className="h-[16px] bg-[repeating-linear-gradient(#1c2850_0_1px,transparent_1px_3px)]" />
        <span className="h-[28px] bg-[repeating-linear-gradient(#a5e0a8_0_2px,transparent_2px_3px)]" />
      </div>
    </div>
    <div className="h-1 bg-[#f4f4f4]" />
    <div className="flex h-9 items-center border-t-2 border-[#5a5a5a] bg-[#dedede]">
      <div className="flex h-[25px] w-[59px] justify-end border border-l-0 border-[#aaa] bg-[#f6f6f6]">
        <span className="flex w-[15px] items-center justify-center border-l border-[#aaa]"><Caret /></span>
      </div>
    </div>
  </div>
)

const App = () => {
  return (
    <div className='relative flex h-screen overflow-hidden bg-[#2e2d33] font-["Noto_Sans","Noto_Sans_CJK_SC",sans-serif] text-[12px] leading-[17px] text-[#3a3a3a]'>
      <Defs />
      <div className="flex min-w-0 flex-1 flex-col border-4 border-[#5a5a5a]">
        <TitleBar />
        <Ribbon />
        <QuickBar />
        <div className="flex min-h-0 flex-1">
          <SidePanel />
          <Viewport />
        </div>
        <StatusBar />
      </div>
      <BackWindow />

      {/* mouse pointer with its highlight */}
      <div className="pointer-events-none absolute top-[25px] left-[160px] h-[38px] w-[76px] bg-[radial-gradient(closest-side,#ffff10_75%,#ffffff_100%)] mix-blend-multiply" />
      <div className="pointer-events-none absolute top-[25px] left-[160px] h-[38px] w-[76px] bg-[radial-gradient(closest-side,rgba(140,150,0,0.3)_60%,transparent_100%)]" />
      <svg width="14" height="20" viewBox="0 0 14 20" className="pointer-events-none absolute top-[45px] left-[199px]" aria-hidden="true">
        <path d="M.5.500v15l3.500-3 2.500 6 3-1.200-2.500-5.800h5z" fill="#fff" stroke="#222" />
      </svg>

      {/* studio watermark */}
      <div className="pointer-events-none absolute top-2 right-0 w-40 whitespace-nowrap">
        <p className="text-[34px] leading-[42px] font-black text-[#1b3a9c]/65">南大盛联</p>
        <p className="text-[16px] leading-[16px] font-bold text-[#d8203c]/80">www.nandasl.com</p>
        <p className="text-[19px] leading-[26px] font-medium text-[#2f7a48]/80">公众号：南大盛联</p>
        <p className="text-[12px] leading-[20px] font-bold text-[#5a50c0]/90">报名咨询QQ：2145974570</p>
      </div>

      <div className="pointer-events-none absolute right-[92px] bottom-[50px] w-[197px] whitespace-nowrap text-[#a0a0a0]/80">
        <p className="text-[20px] leading-[27px]">激活 Windows</p>
        <p className="text-[15px] leading-[22px]">转到"设置"以激活 Windows。</p>
      </div>
    </div>
  )
}

export default App
